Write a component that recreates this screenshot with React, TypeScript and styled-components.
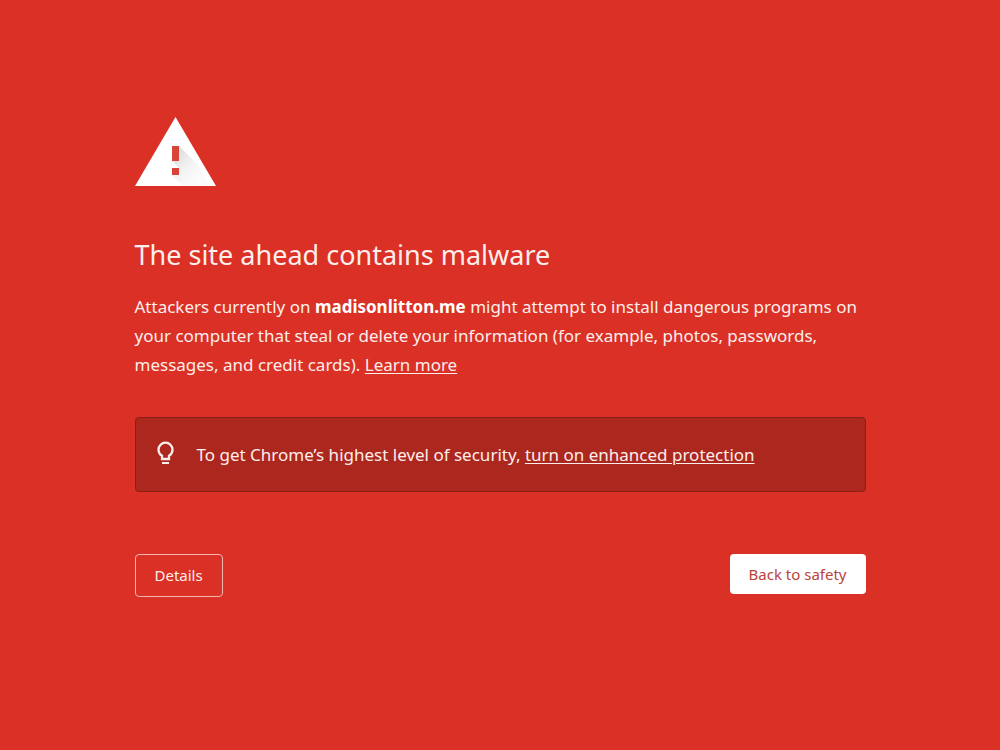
import React from "react";
import styled, { createGlobalStyle } from "styled-components";

const GlobalStyle = createGlobalStyle`
  *, *::before, *::after { box-sizing: border-box; }
  body {
    margin: 0;
    background: #da3025;
    color: #fdeeec;
    font-family: "Segoe UI", "Noto Sans", "Open Sans", sans-serif;
    font-size: 17px;
    line-height: 29px;
  }
`;

const Page = styled.main`
  width: 100%;
  max-width: 779px;
  margin: 0 auto;
  padding: 117px 24px 48px;
`;

const WarningIcon = styled.svg`
  display: block;
  width: 81px;
  height: 70px;
`;

const Title = styled.h1`
  margin: 48px 0 17px;
  font-size: 27px;
  font-weight: 400;
  line-height: 40px;
`;

const Message = styled.p`
  margin: 0;
`;

const Host = styled.strong`
  color: #fff;
  font-weight: 700;
`;

const TextLink = styled.a`
  color: inherit;
  text-decoration: underline;
  text-decoration-thickness: 1px;
  text-underline-offset: 2px;
`;

const Tip = styled.section`
  display: flex;
  align-items: center;
  gap: 20px;
  margin-top: 38px;
  padding: 22px 17px;
  background: #ac271e;
  border: 1px solid #8c1d17;
  border-radius: 4px;
`;

const BulbIcon = styled.svg`
  flex: none;
  width: 24px;
  height: 27px;
`;

const Actions = styled.div`
  display: flex;
  align-items: flex-start;
  justify-content: space-between;
  margin-top: 62px;
`;

const Button = styled.button<{ $primary?: boolean }>`
  height: ${(p) => (p.$primary ? 40 : 43)}px;
  padding: 0 19px;
  font: inherit;
  font-size: 15px;
  border: ${(p) => (p.$primary ? "none" : "1px solid #f3b5b0")};
  border-radius: 4px;
  background: ${(p) => (p.$primary ? "#fff" : "transparent")};
  color: ${(p) => (p.$primary ? "#b8443e" : "#fdeeec")};
  cursor: pointer;
`;

export default function App() {
  return (
    <>
      <GlobalStyle />
      <Page>
        <WarningIcon viewBox="0 0 81 70" role="img" aria-label="Warning">
          <defs>
            <linearGradient id="shade" gradientUnits="userSpaceOnUse" x1="40" y1="40" x2="62" y2="62">
              <stop offset="0" stopColor="#e0e0e0" />
              <stop offset="0.5" stopColor="#f3f3f3" />
              <stop offset="1" stopColor="#fbfbfb" />
            </linearGradient>
          </defs>
          <path d="M40.5 0 81 69H0Z" fill="#fff" />
          <path d="M44 29 62 47 75 69H48L37 58 44 51 37 44Z" fill="url(#shade)" />
          <path d="M37 29h7v15h-7zM37 51h7v7h-7z" fill="#d8433a" />
        </WarningIcon>
        <Title>The site ahead contains malware</Title>
        <Message>
          Attackers currently on <Host>madisonlitton.me</Host> might attempt to install dangerous
          programs on your computer that steal or delete your information (for example, photos,
          passwords, messages, and credit cards). <TextLink href="#learn-more">Learn more</TextLink>
        </Message>
        <Tip>
          <BulbIcon viewBox="0 0 24 27" aria-hidden="true">
            <path
              d="M9 18v-3.300C7 13.500 5.500 11.400 5.500 8.700a7 7 0 0 1 14 0c0 2.700-1.500 4.800-3.500 6V18z"
              fill="none"
              stroke="#fdeeec"
              strokeWidth="2.300"
            />
            <path d="M9 21h7v2H9z" fill="#fdeeec" />
          </BulbIcon>
          <span>
            To get Chrome’s highest level of security,{" "}
            <TextLink href="#enhanced-protection">turn on enhanced protection</TextLink>
          </span>
        </Tip>
        <Actions>
          <Button type="button">Details</Button>
          <Button type="button" $primary>
            Back to safety
          </Button>
        </Actions>
      </Page>
    </>
  );
}
